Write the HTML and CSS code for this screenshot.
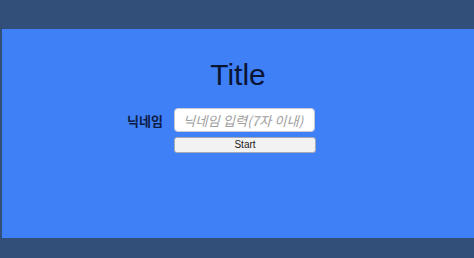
FILE: index.html
```html
<!DOCTYPE html>
<html>
<head>
<meta charset="utf-8">
<link rel="stylesheet" href="styles.css">
</head>
<body>
<div class="panel">
  <h1 class="title">Title</h1>
  <div class="form">
    <label class="label" for="nick">닉네임</label>
    <input class="input" id="nick" type="text" placeholder="닉네임 입력(7자 이내)">
    <button class="start" type="button">Start</button>
  </div>
</div>
</body>
</html>
```
FILE: styles.css
```css
html, body {
  margin: 0;
  padding: 0;
}
body {
  background: #324f7a;
  width: 474px;
  height: 258px;
  overflow: hidden;
  font-family: "Liberation Sans", Arial, "Noto Sans CJK KR", sans-serif;
}
.panel {
  margin: 29px 0 0 2px;
  height: 209px;
  background: #3f80f7;
  display: flex;
  flex-direction: column;
  box-sizing: border-box;
  padding-top: 31px;
}
.title {
  margin: 0;
  font-weight: normal;
  font-size: 30px;
  line-height: 30px;
  color: #0a1533;
  text-align: center;
}
.form {
  margin-top: 18px;
  display: grid;
  grid-template-columns: 38px 142px;
  column-gap: 11px;
  row-gap: 5px;
  padding-left: 123px;
}
.label {
  justify-self: end;
  align-self: center;
  white-space: nowrap;
  font-family: "Noto Sans CJK KR", sans-serif;
  font-size: 13px;
  font-weight: bold;
  color: #0d1d48;
}
.input {
  box-sizing: border-box;
  width: 141px;
  height: 24px;
  margin: 0;
  padding: 0 8px;
  border: 1px solid #c4c9d4;
  border-radius: 4px;
  background: #ffffff;
  font-family: "Noto Sans CJK KR", sans-serif;
  font-size: 13.3px;
  outline: none;
}
.input::placeholder {
  color: #a0a0a0;
  font-style: italic;
}
.start {
  grid-column: 2;
  box-sizing: border-box;
  width: 142px;
  height: 16px;
  margin: 0;
  padding: 0;
  border: 1px solid #a3a9b5;
  border-radius: 3px;
  background: #f2f2f2;
  font-family: "Liberation Sans", Arial, sans-serif;
  font-size: 10px;
  line-height: 14px;
  color: #1a1a1a;
}
```
